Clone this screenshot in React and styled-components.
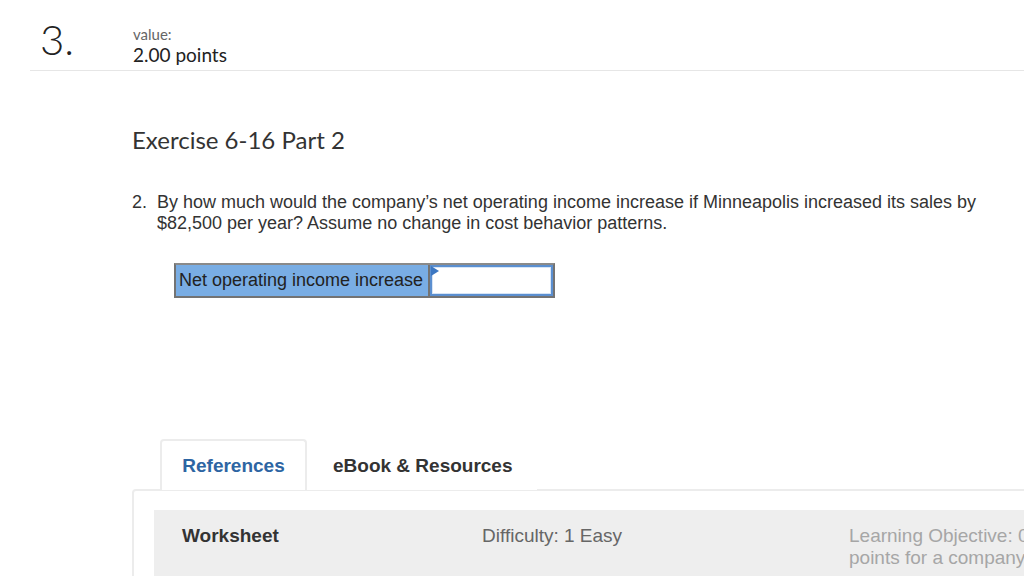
import React from "react";
import styled, { createGlobalStyle } from "styled-components";

const Global = createGlobalStyle`
  html, body { margin: 0; padding: 0; background: #fff; }
  body { width: 1024px; height: 576px; overflow: hidden; }
`;

const Page = styled.div`
  width: 1024px;
  height: 576px;
  overflow: hidden;
  font-family: "Liberation Sans", Arial, sans-serif;
  color: #333;
`;

const Header = styled.header`
  margin-left: 30px;
  height: 71px;
  border-bottom: 1px solid #e6e6e6;
  display: flex;
  align-items: flex-start;
  box-sizing: border-box;
`;

const QNumber = styled.div`
  width: 93px;
  padding-left: 10px;
  padding-top: 14px;
  font-family: Lato, "Open Sans", sans-serif;
  font-weight: 300;
  font-size: 42px;
  line-height: 50px;
  color: #222;
`;

const ValueBlock = styled.div`
  padding-top: 26px;
  font-family: Lato, "Open Sans", sans-serif;
  display: flex;
  flex-direction: column;
`;

const ValueLabel = styled.span`
  font-size: 15px;
  line-height: 17px;
  color: #666;
`;

const ValuePoints = styled.span`
  font-size: 19px;
  line-height: 24px;
  color: #222;
`;

const Content = styled.main`
  padding-left: 132px;
`;

const Title = styled.h2`
  margin: 53px 0 0;
  font-family: Lato, "Open Sans", sans-serif;
  font-weight: 400;
  font-size: 24px;
  line-height: 31px;
  color: #333;
`;

const Question = styled.div`
  margin-top: 37px;
  display: flex;
  width: 870px;
  font-size: 18px;
  line-height: 21px;
  color: #333;
`;

const QIndex = styled.span`
  width: 25px;
  flex: none;
`;

const QText = styled.p`
  margin: 0;
`;

const AnswerTable = styled.div`
  margin: 29px 0 0 42px;
  display: flex;
  width: 381px;
  height: 35px;
  border: 2px solid #737373;
  border-top-color: #8a8a8a;
  box-sizing: border-box;
`;

const LabelCell = styled.div`
  width: 254px;
  flex: none;
  background: #79ade4;
  border-right: 2px solid #737373;
  padding-left: 3px;
  font-size: 18px;
  line-height: 30px;
  color: #222;
  box-sizing: border-box;
  white-space: nowrap;
`;

const InputCell = styled.div`
  position: relative;
  flex: 1;
  background: #fff;
  border: 2px solid #5b8fd0;
  box-shadow: inset 0 0 0 1px #d6e4f5;
`;

const Flag = styled.span`
  position: absolute;
  left: -1px;
  top: -1px;
  width: 0;
  height: 0;
  border-top: 5px solid transparent;
  border-bottom: 5px solid transparent;
  border-left: 8px solid #3c77c2;
`;

const Tabs = styled.div`
  margin: 141px 0 0 28px;
  display: flex;
  align-items: flex-end;
  position: relative;
  z-index: 1;
`;

const Tab = styled.div`
  height: 51px;
  box-sizing: border-box;
  display: flex;
  align-items: center;
  font-size: 19px;
  font-weight: 700;
  color: ${p => (p.$active ? "#2d65a3" : "#333")};
  background: #fff;
  border: 2px solid ${p => (p.$active ? "#ececec" : "transparent")};
  border-bottom: none;
  border-radius: 4px 4px 0 0;
  margin-bottom: -1px;
  width: ${p => (p.$active ? "147px" : "auto")};
  justify-content: ${p => (p.$active ? "center" : "flex-start")};
  padding-left: ${p => (p.$active ? "0" : "24px")};
  padding-right: ${p => (p.$active ? "0" : "22px")};
`;

const Panel = styled.section`
  width: 960px;
  border: 2px solid #ececec;
  border-radius: 4px;
  padding: 19px 20px;
  box-sizing: border-box;
`;

const InfoBox = styled.div`
  background: #eeeeee;
  padding: 15px 28px 20px;
  display: grid;
  grid-template-columns: 300px 367px 300px;
  font-size: 19px;
  line-height: 22px;
  white-space: nowrap;
`;

const Heading = styled.span`
  font-weight: 700;
  color: #333;
`;

const Difficulty = styled.span`
  color: #666;
`;

const Objective = styled.span`
  color: #a6a6a6;
`;

export default function App() {
  return (
    <>
      <Global />
      <Page>
        <Header>
          <QNumber>3.</QNumber>
          <ValueBlock>
            <ValueLabel>value:</ValueLabel>
            <ValuePoints>2.00 points</ValuePoints>
          </ValueBlock>
        </Header>
        <Content>
          <Title>Exercise 6-16 Part 2</Title>
          <Question>
            <QIndex>2.</QIndex>
            <QText>
              By how much would the company’s net operating income increase if Minneapolis increased its sales by
              $82,500 per year? Assume no change in cost behavior patterns.
            </QText>
          </Question>
          <AnswerTable>
            <LabelCell>Net operating income increase</LabelCell>
            <InputCell>
              <Flag />
            </InputCell>
          </AnswerTable>
          <Tabs>
            <Tab $active>References</Tab>
            <Tab>eBook &amp; Resources</Tab>
          </Tabs>
          <Panel>
            <InfoBox>
              <Heading>Worksheet</Heading>
              <Difficulty>Difficulty: 1 Easy</Difficulty>
              <Objective>
                Learning Objective: 06-02 Prepare
                <br />
                points for a company
              </Objective>
            </InfoBox>
          </Panel>
        </Content>
      </Page>
    </>
  );
}
